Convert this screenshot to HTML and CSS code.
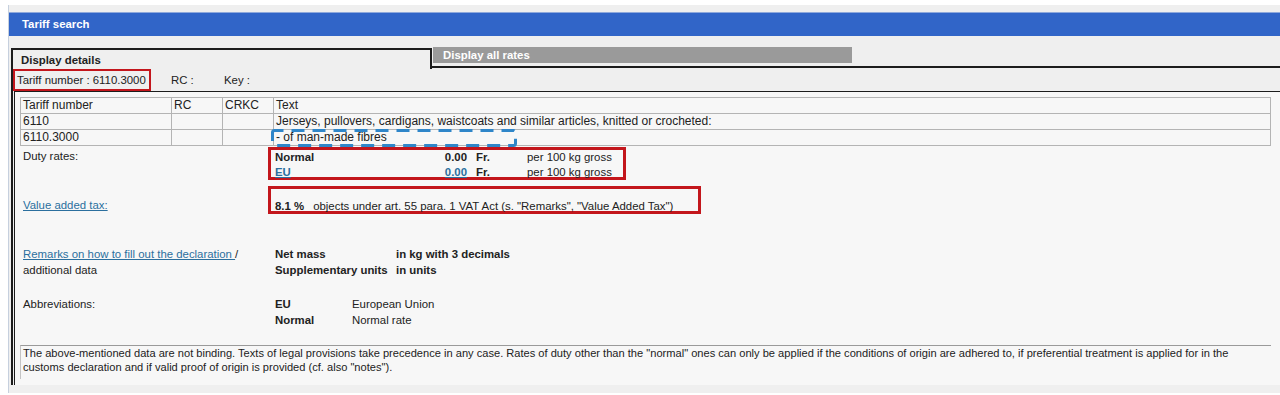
FILE: index.html
```html
<!DOCTYPE html>
<html lang="en">
<head>
  <meta charset="UTF-8" />
  <title>Tariff search</title>
  <link rel="stylesheet" href="styles.css">
</head>
<body>

  <div class="page">
    <div class="titlebar">Tariff search</div>

    <div class="tabs">
      <div class="tab tab-active">Display details</div>
      <div class="tab tab-other">Display all rates</div>
    </div>

    <div class="panel">
      <div class="keyrow">
        <span class="key-number">Tariff number : 6110.3000</span>
        <span class="key-rc">RC :</span>
        <span class="key-key">Key :</span>
      </div>

      <div class="content">
        <table class="tariff-table">
          <tr>
            <td class="col-number">Tariff number</td>
            <td class="col-rc">RC</td>
            <td class="col-crkc">CRKC</td>
            <td>Text</td>
          </tr>
          <tr>
            <td>6110</td>
            <td></td>
            <td></td>
            <td>Jerseys, pullovers, cardigans, waistcoats and similar articles, knitted or crocheted:</td>
          </tr>
          <tr>
            <td>6110.3000</td>
            <td></td>
            <td></td>
            <td class="marked">- of man-made fibres<svg class="dash-box" width="246" height="18" viewBox="0 0 246 18"><rect x="1.5" y="1.5" width="243" height="15" rx="2" fill="none" stroke="#2f86c9" stroke-width="3" stroke-dasharray="13 8" stroke-dashoffset="4"/></svg></td>
          </tr>
        </table>

        <div class="detail detail-rates">
          <div class="label">Duty rates:</div>
          <div class="value">
            <div class="red-box rates-box">
              <div class="rate-row">
                <span class="rate-name bold">Normal</span>
                <span class="rate-value bold">0.00</span>
                <span class="rate-cur bold">Fr.</span>
                <span>per 100 kg gross</span>
              </div>
              <div class="rate-row">
                <span class="rate-name bold"><a href="#">EU</a></span>
                <span class="rate-value bold"><a href="#">0.00</a></span>
                <span class="rate-cur bold">Fr.</span>
                <span>per 100 kg gross</span>
              </div>
            </div>
          </div>
        </div>

        <div class="detail detail-vat">
          <div class="label"><a href="#">Value added tax:</a></div>
          <div class="value">
            <div class="red-box vat-box">
              <span class="vat-rate bold">8.1 %</span>
              <span>objects under art. 55 para. 1 VAT Act (s. "Remarks", "Value Added Tax")</span>
            </div>
          </div>
        </div>

        <div class="detail detail-remarks">
          <div class="label"><a href="#">Remarks on how to fill out the declaration </a>/<br>additional data</div>
          <div class="value">
            <div class="pair bold"><span class="pair-key">Net mass</span><span>in kg with 3 decimals</span></div>
            <div class="pair bold"><span class="pair-key">Supplementary units</span><span>in units</span></div>
          </div>
        </div>

        <div class="detail detail-abbr">
          <div class="label">Abbreviations:</div>
          <div class="value">
            <div class="pair"><span class="abbr-key bold">EU</span><span>European Union</span></div>
            <div class="pair"><span class="abbr-key bold">Normal</span><span>Normal rate</span></div>
          </div>
        </div>

        <div class="disclaimer">
          The above-mentioned data are not binding. Texts of legal provisions take precedence in any case. Rates of duty other than the "normal" ones can only be applied if the conditions of origin are adhered to, if preferential treatment is applied for in the customs declaration and if valid proof of origin is provided (cf. also "notes").
        </div>
      </div>
    </div>
  </div>

</body>
</html>
```

FILE: styles.css
```css
body {
  font-family: 'Liberation Sans', Arial, sans-serif;
  font-size: 11.4px;
  margin: 0;
  padding: 0;
  background-color: #ffffff;
  color: #222;
}

a {
  color: #2b6f9e;
  text-decoration: underline;
}

.bold {
  font-weight: bold;
}

.page {
  margin: 5px 0 0 8px;
  padding-top: 7px;
  padding-bottom: 8px;
  background-color: #efefef;
  border-left: 1px solid #c6d0de;
}

.titlebar {
  height: 23px;
  line-height: 23px;
  padding-left: 13px;
  background-color: #3165c8;
  border-top: 1px solid #8fa9dc;
  color: #ffffff;
  font-weight: bold;
}

.tabs {
  display: flex;
  align-items: flex-start;
  margin: 11px 0 0 2px;
  border-bottom: 2px solid #1c1c1c;
  height: 19px;
}

.tab {
  font-weight: bold;
  box-sizing: border-box;
}

.tab-active {
  width: 421px;
  height: 21px;
  margin-top: 1px;
  padding: 4px 0 0 8px;
  background-color: #efefef;
  border: 2px solid #1c1c1c;
  border-bottom: none;
  position: relative;
  z-index: 1;
}

.tab-other {
  width: 419px;
  height: 16px;
  line-height: 16px;
  margin-left: 1px;
  padding-left: 10px;
  background-color: #9a9a9a;
  color: #ffffff;
}

.panel {
  margin-left: 2px;
  border-left: 2px solid #1c1c1c;
}

.keyrow {
  display: flex;
  align-items: center;
  height: 23px;
  white-space: nowrap;
}

.key-number {
  box-sizing: border-box;
  width: 138px;
  height: 22px;
  line-height: 18px;
  padding-left: 2px;
  border: 2px solid #c3161c;
}

.key-rc {
  margin-left: 20px;
  width: 53px;
}

.content {
  border-top: 1px solid #1c1c1c;
  border-left: 1px solid #1c1c1c;
  margin-left: 1px;
  padding: 5px 9px 6px 5px;
  background-color: #f7f7f7;
}

.tariff-table {
  width: 100%;
  border-collapse: collapse;
  background-color: #f7f7f7;
  font-size: 12px;
}

.tariff-table td {
  border: 1px solid #b4b4b4;
  height: 15px;
  line-height: 15px;
  padding: 0 2px;
  vertical-align: middle;
}

.tariff-table .col-number {
  width: 146px;
}

.tariff-table .col-rc,
.tariff-table .col-crkc {
  width: 46px;
}

.marked {
  position: relative;
}

.dash-box {
  position: absolute;
  left: -3px;
  top: -1px;
  z-index: 2;
}

.detail {
  display: flex;
}

.detail .label {
  width: 245px;
  padding-left: 3px;
  flex-shrink: 0;
}

.red-box {
  display: inline-block;
  box-sizing: border-box;
  border: 3px solid #c3161c;
  padding-left: 4px;
}

.detail-rates {
  margin-top: 1px;
}

.detail-rates .label {
  padding-top: 3px;
}

.rates-box {
  width: 358px;
  height: 33px;
  padding-top: 0;
}

.rate-row {
  display: flex;
  height: 15px;
  line-height: 14px;
}

.rate-name {
  width: 140px;
}

.rate-value {
  width: 52px;
  text-align: right;
}

.rate-cur {
  width: 51px;
  margin-left: 9px;
}

.detail-vat {
  margin-top: 6px;
  align-items: flex-end;
}

.detail-vat .label {
  padding-bottom: 3px;
}

.vat-box {
  width: 433px;
  height: 28px;
  padding-top: 11px;
  line-height: 13px;
}

.vat-rate {
  display: inline-block;
  width: 35px;
}

.detail-remarks {
  margin-top: 32px;
  line-height: 16px;
}

.detail-remarks .value {
  padding-left: 7px;
}

.pair {
  display: flex;
  line-height: 16px;
}

.pair-key {
  width: 121px;
}

.detail-abbr {
  margin-top: 18px;
  line-height: 16px;
}

.detail-abbr .value {
  padding-left: 7px;
}

.abbr-key {
  width: 77px;
}

.disclaimer {
  margin-top: 17px;
  padding: 0 2px 5px 2px;
  border-top: 1px solid #9a9a9a;
  border-left: 1px solid #c4c4c4;
  line-height: 14px;
  font-size: 11.1px;
}
```
